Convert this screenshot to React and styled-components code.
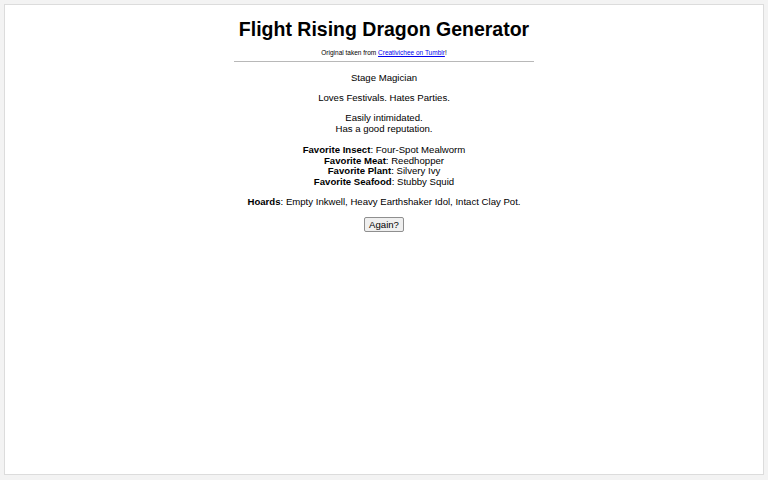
import React from 'react';
import styled, { createGlobalStyle } from 'styled-components';

const GlobalStyle = createGlobalStyle`
    html, body {
        margin: 0;
        padding: 0;
        background-color: #f3f3f3;
        font-family: "Liberation Sans", Arial, sans-serif;
        color: #000;
    }
`

const dragon = {
    job: 'Stage Magician',
    likes: 'Loves Festivals. Hates Parties.',
    traits: ['Easily intimidated.', 'Has a good reputation.'],
    favorites: [
        ['Favorite Insect', 'Four-Spot Mealworm'],
        ['Favorite Meat', 'Reedhopper'],
        ['Favorite Plant', 'Silvery Ivy'],
        ['Favorite Seafood', 'Stubby Squid'],
    ],
    hoards: ['Empty Inkwell', 'Heavy Earthshaker Idol', 'Intact Clay Pot'],
};

const App = () => {
    return (
        <>
            <GlobalStyle />
            <Page>
                <Panel>
                    <Column>
                        <Title>Flight Rising Dragon Generator</Title>
                        <Credit>
                            Original taken from <a href="#">Creativichee on Tumblr</a>!
                        </Credit>
                        <Rule />
                        <Block $gap={10.5}>{dragon.job}</Block>
                        <Block>{dragon.likes}</Block>
                        <Block>
                            {dragon.traits.map(t => <Line key={t}>{t}</Line>)}
                        </Block>
                        <Block $gap={10.5}>
                            {dragon.favorites.map(([label, value]) => (
                                <Line key={label}><b>{label}</b>: {value}</Line>
                            ))}
                        </Block>
                        <Block>
                            <b>Hoards</b>: {dragon.hoards.join(', ')}.
                        </Block>
                        <Again type="button">Again?</Again>
                    </Column>
                </Panel>
            </Page>
        </>
    )
}

export default App;

const Page = styled.div`
    padding: 4px 4px 5px 4px;
    height: 100vh;
    box-sizing: border-box;
`

const Panel = styled.div`
    height: 100%;
    box-sizing: border-box;
    background-color: #fff;
    border: 1px solid #dcdcdc;
    display: flex;
    justify-content: center;
`

const Column = styled.div`
    width: 300px;
    text-align: center;
    font-size: 9.6px;
    line-height: 10.7px;
`

const Title = styled.h1`
    margin: 12px -20px 0 -20px;
    font-size: 19.5px;
    line-height: 24px;
    font-weight: bold;
    white-space: nowrap;
`

const Credit = styled.div`
    margin-top: 8px;
    font-size: 6.5px;
    line-height: 8px;
    a {
        color: #0000ee;
        text-decoration: underline;
    }
`

const Rule = styled.hr`
    margin: 4px 0 0 0;
    border: none;
    border-top: 1px solid #b8b8b8;
    height: 0;
`

const Block = styled.div`
    margin-top: ${p => p.$gap || 9.5}px;
`

const Line = styled.div``

const Again = styled.button`
    margin-top: 9px;
    font-family: "Liberation Sans", Arial, sans-serif;
    font-size: 9.6px;
    padding: 1px 4px;
    border: 1px solid #8f8f8f;
    border-radius: 2px;
    background-color: #efefef;
    color: #000;
`
